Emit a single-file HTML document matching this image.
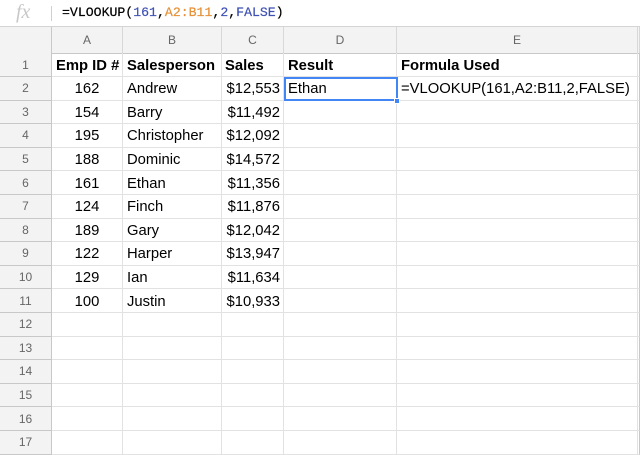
<!DOCTYPE html>
<html><head><meta charset="utf-8"><style>
*{box-sizing:border-box;margin:0;padding:0}
body{width:640px;height:443px;overflow:hidden;background:#fff;font-family:"Liberation Sans",Arial,sans-serif;position:relative}
.fb{position:absolute;left:0;top:0;width:640px;height:27px;border-bottom:1px solid #d4d4d4;background:#fff}
.fx{position:absolute;left:16px;top:1px;font-family:"Liberation Serif",serif;font-style:italic;color:#c8c8c8;font-size:20px}
.sep{position:absolute;left:51px;top:6px;width:1px;height:15px;background:#d0d0d0}
.fm{position:absolute;left:62px;top:5px;font-family:"Liberation Mono",monospace;font-size:13.2px;color:#000;-webkit-text-stroke:0.2px #000}
.row{position:absolute;left:0;width:640px;display:flex}
.c{height:100%;border-right:1px solid #e2e2e2;border-bottom:1px solid #e2e2e2;font-size:14.8px;color:#000;white-space:nowrap;overflow:visible;padding:2px 4px 0;display:flex;align-items:center}
.h{background:#f3f3f3;color:#666;font-size:12px;justify-content:center;border-right:1px solid #c8c8c8;border-bottom:1px solid #c8c8c8;padding-top:0}
.ch{background:#f3f3f3;color:#666;font-size:12px;justify-content:center;border-right:1px solid #d8d8d8;border-bottom:1px solid #c8c8c8;padding-top:0}
.b{font-weight:bold}
.ctr{justify-content:center}.r{justify-content:flex-end}
</style></head><body>
<div class="fb"><span class="fx">fx</span><div class="sep"></div>
<div class="fm">=VLOOKUP(<span style="color:#3f51b5;-webkit-text-stroke-color:#3f51b5">161</span>,<span style="color:#e69138;-webkit-text-stroke-color:#e69138">A2:B11</span>,<span style="color:#3f51b5;-webkit-text-stroke-color:#3f51b5">2</span>,<span style="color:#3f51b5;-webkit-text-stroke-color:#3f51b5">FALSE</span>)</div></div>
<div class="row" style="top:27px;height:26.5px">
<div class="c h" style="width:52px"></div><div class="c ch" style="width:71px">A</div><div class="c ch" style="width:99px">B</div><div class="c ch" style="width:62px">C</div><div class="c ch" style="width:113px">D</div><div class="c ch" style="width:241px">E</div><div class="c ch" style="width:2px;padding:0"></div></div>
<div id="g"></div>
<script>
var d=[["Emp ID #","Salesperson","Sales","Result","Formula Used"],
["162","Andrew","$12,553","Ethan","=VLOOKUP(161,A2:B11,2,FALSE)"],
["154","Barry","$11,492"],["195","Christopher","$12,092"],["188","Dominic","$14,572"],["161","Ethan","$11,356"],["124","Finch","$11,876"],["189","Gary","$12,042"],["122","Harper","$13,947"],["129","Ian","$11,634"],["100","Justin","$10,933"]];
var h="";
for(var i=0;i<17;i++){var t=53.4+i*23.6;var r=d[i]||[];var b=i==0?" b":"";
h+='<div class="row" style="top:'+t+'px;height:23.6px"><div class="c h" style="width:52px">'+(i+1)+'</div>'+
'<div class="c'+b+(i?" ctr":"")+'" style="width:71px">'+(r[0]||"")+'</div>'+
'<div class="c'+b+'" style="width:99px">'+(r[1]||"")+'</div>'+
'<div class="c'+b+(i?" r":"")+'" style="width:62px;padding:2px 3px 0">'+(r[2]||"")+'</div>'+
'<div class="c'+b+'" style="width:113px">'+(r[3]||"")+'</div>'+
'<div class="c'+b+'" style="width:241px">'+(r[4]||"")+'</div><div class="c" style="width:2px;padding:0;border-right:1px solid #c8c8c8"></div></div>';}
document.getElementById("g").innerHTML=h;
</script>
<div style="position:absolute;left:284px;top:76.5px;width:114px;height:24px;border:2px solid #4285f4"></div>
<div style="position:absolute;left:394px;top:97.5px;width:6px;height:6px;background:#4285f4;border:1px solid #fff"></div>
</body></html>
